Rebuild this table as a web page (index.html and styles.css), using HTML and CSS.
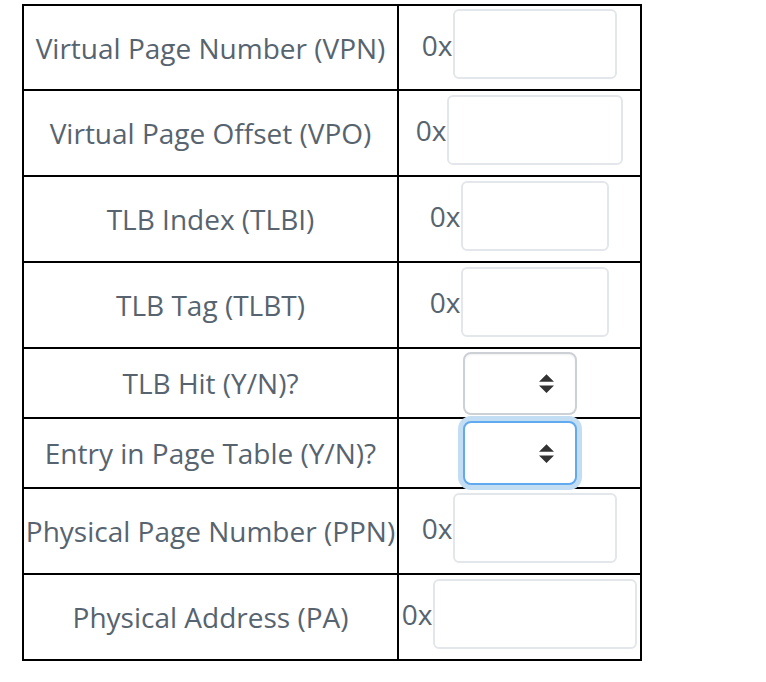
FILE: index.html
```html
<!DOCTYPE html>
<html>
<head>
<meta charset="utf-8">
<link rel="stylesheet" href="styles.css">
</head>
<body>
<table class="addr-table">
  <tr class="row first">
    <td class="label"><div class="cell">Virtual Page Number (VPN)</div></td>
    <td class="value"><div class="cell"><div class="group"><span class="hex">0x</span><input class="field w164" type="text"></div></div></td>
  </tr>
  <tr class="row">
    <td class="label"><div class="cell">Virtual Page Offset (VPO)</div></td>
    <td class="value"><div class="cell"><div class="group"><span class="hex">0x</span><input class="field w176" type="text"></div></div></td>
  </tr>
  <tr class="row">
    <td class="label"><div class="cell">TLB Index (TLBI)</div></td>
    <td class="value"><div class="cell"><div class="group"><span class="hex">0x</span><input class="field w148" type="text"></div></div></td>
  </tr>
  <tr class="row">
    <td class="label"><div class="cell">TLB Tag (TLBT)</div></td>
    <td class="value"><div class="cell"><div class="group"><span class="hex">0x</span><input class="field w148" type="text"></div></div></td>
  </tr>
  <tr class="row short">
    <td class="label"><div class="cell">TLB Hit (Y/N)?</div></td>
    <td class="value"><div class="cell"><select class="choice"><option></option><option>Y</option><option>N</option></select></div></td>
  </tr>
  <tr class="row short">
    <td class="label"><div class="cell">Entry in Page Table (Y/N)?</div></td>
    <td class="value"><div class="cell"><select class="choice focused"><option></option><option>Y</option><option>N</option></select></div></td>
  </tr>
  <tr class="row">
    <td class="label"><div class="cell">Physical Page Number (PPN)</div></td>
    <td class="value"><div class="cell"><div class="group"><span class="hex">0x</span><input class="field w164" type="text"></div></div></td>
  </tr>
  <tr class="row">
    <td class="label"><div class="cell">Physical Address (PA)</div></td>
    <td class="value"><div class="cell"><div class="group"><span class="hex">0x</span><input class="field w204" type="text"></div></div></td>
  </tr>
</table>
</body>
</html>
```

FILE: styles.css
```css
* { box-sizing: border-box; }
html, body { margin: 0; padding: 0; background: #fff; }
body {
  padding: 4px 0 0 22px;
  font-family: "Open Sans", "DejaVu Sans", sans-serif;
  font-size: 28px;
  color: #57646f;
}
.addr-table {
  border-collapse: separate;
  border-spacing: 0;
  border-top: 2px solid #000;
  border-left: 2px solid #000;
}
.addr-table td {
  padding: 0;
  border-right: 2px solid #000;
  border-bottom: 2px solid #000;
}
.label { width: 375px; }
.value { width: 243px; }
.cell {
  height: 84px;
  display: flex;
  align-items: center;
  justify-content: center;
  white-space: nowrap;
}
.first .cell { height: 83px; }
.short .cell { height: 68px; }
.group {
  display: flex;
  align-items: center;
  margin-bottom: 7px;
}
.hex { line-height: 1; padding-top: 1px; }
.field {
  height: 70px;
  border: 2px solid #e3e7eb;
  border-radius: 6px;
  background: #fff;
  margin: 0 0 0 1px;
  padding: 0;
  outline: none;
}
.w148 { width: 148px; }
.w164 { width: 164px; }
.w176 { width: 176px; }
.w204 { width: 204px; }
.choice {
  -webkit-appearance: none;
  appearance: none;
  width: 114px;
  height: 63px;
  border: 2px solid #cdd1d6;
  border-radius: 8px;
  background-color: #fff;
  background-image: url("data:image/svg+xml;charset=utf8,%3Csvg xmlns='http://www.w3.org/2000/svg' viewBox='0 0 8 10'%3E%3Cpath fill='%23333' d='M4 0L0 4h8zM4 10L0 6h8z'/%3E%3C/svg%3E");
  background-repeat: no-repeat;
  background-position: right 21px center;
  background-size: 15px 19px;
  box-shadow: inset 0 1px 2px rgba(0,0,0,0.06);
  font-family: inherit;
  font-size: 20px;
  color: transparent;
  outline: none;
}
.choice.focused {
  height: 64px;
  border-color: #62aaf0;
  box-shadow: 0 0 0 5px #c3ddf3;
}
```
